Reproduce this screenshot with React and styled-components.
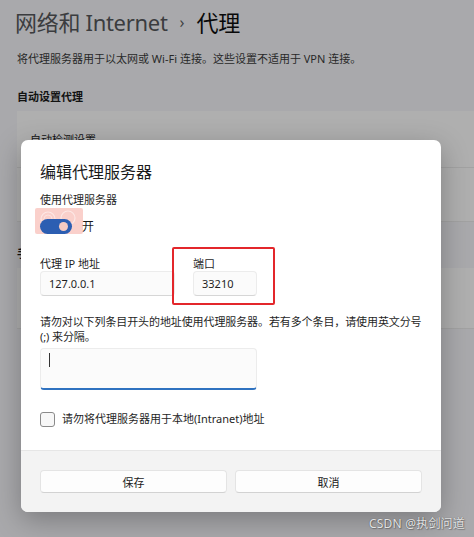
import React from "react";
import styled, { createGlobalStyle } from "styled-components";

const Global = createGlobalStyle`
  html, body {
    margin: 0;
    padding: 0;
    background: #f2f3f6;
    overflow: hidden;
  }
  body {
    font-family: "Noto Sans", "Noto Sans CJK SC", sans-serif;
    color: #1b1b1b;
  }
`;

// Settings page behind the dialog
const Page = styled.div`
  position: relative;
  width: 474px;
  height: 537px;
  overflow: hidden;
  padding: 7px 0 0 17px;
  box-sizing: border-box;
`;

const Header = styled.h1`
  margin: 0 0 0 -2px;
  font-size: 22px;
  font-weight: 400;
  line-height: 30px;
  display: flex;
  align-items: center;
  gap: 12px;
  white-space: nowrap;
`;

const Crumb = styled.span`
  color: ${(p) => (p.$current ? "#0d0d0d" : "#55575b")};
  letter-spacing: -0.3px;
`;

const Chevron = styled.span`
  font-size: 16px;
  color: #5c5e62;
`;

const Desc = styled.p`
  margin: 14px 0 0;
  font-size: 11px;
  line-height: 16px;
  color: #3a3a3a;
`;

const SectionTitle = styled.h2`
  margin: ${(p) => p.$top || "22px"} 0 6px;
  font-size: 11px;
  font-weight: 600;
  line-height: 16px;
`;

const Card = styled.div`
  display: flex;
  flex-direction: column;
`;

const CardRow = styled.div`
  height: ${(p) => p.$h || 54}px;
  background: #fbfbfb;
  border-bottom: 1px solid #e8e8e8;
  padding: 0 13px;
  display: flex;
  align-items: center;
  font-size: 11px;
  color: #222;
`;

const Overlay = styled.div`
  position: absolute;
  inset: 0;
  background: rgba(0, 0, 0, 0.3);
`;

// Dialog
const Dialog = styled.div`
  position: absolute;
  left: 21px;
  top: 140px;
  width: 420px;
  background: #fff;
  border-radius: 7px;
  box-shadow: 0 8px 28px rgba(0, 0, 0, 0.28);
  overflow: hidden;
`;

const Body = styled.div`
  position: relative;
  padding: 21px 19px 23px;
  display: flex;
  flex-direction: column;
`;

const Title = styled.div`
  font-size: 16px;
  line-height: 22px;
  color: #1a1a1a;
`;

const Label = styled.div`
  font-size: 11px;
  line-height: ${(p) => p.$lh || 16}px;
  color: #1f1f1f;
  margin-top: ${(p) => p.$mt || 0}px;
  white-space: nowrap;
`;

const ToggleRow = styled.div`
  position: relative;
  z-index: 1;
  margin-top: 8px;
  height: 20px;
  display: flex;
  align-items: center;
  gap: 10px;
  font-size: 12px;
`;

const Toggle = styled.div`
  width: 32px;
  height: 15px;
  border-radius: 8px;
  background: #2c5eb2;
  position: relative;
  &::after {
    content: "";
    position: absolute;
    right: 4px;
    top: 3px;
    width: 9px;
    height: 9px;
    border-radius: 50%;
    background: #f6cbc2;
  }
`;

const Stamp = styled.svg`
  position: absolute;
  left: 14px;
  top: 68px;
`;

const Fields = styled.div`
  margin-top: 21px;
  display: flex;
  gap: 18px;
`;

const Field = styled.div`
  display: flex;
  flex-direction: column;
`;

const Input = styled.div`
  box-sizing: border-box;
  width: ${(p) => p.$w}px;
  height: ${(p) => p.$h || 25}px;
  background: #fbfbfb;
  border: 1px solid #ececec;
  border-bottom: ${(p) => (p.$focus ? "2px solid #2f72c0" : "1px solid #d6d6d6")};
  border-radius: 4px;
  padding: ${(p) => (p.$focus ? "4px 8px" : "0 8px")};
  display: flex;
  align-items: ${(p) => (p.$focus ? "flex-start" : "center")};
  font-size: 11px;
  color: #1f1f1f;
`;

const Caret = styled.span`
  width: 1px;
  height: 14px;
  background: #333;
`;

const Highlight = styled.div`
  position: absolute;
  left: 151px;
  top: 107px;
  width: 103px;
  height: 58px;
  border: 2px solid #e3262b;
  border-radius: 2px;
  box-sizing: border-box;
`;

const Hint = styled.div`
  margin-top: 18px;
  margin-bottom: 4px;
  font-size: 11px;
  line-height: 15px;
  color: #1f1f1f;
  letter-spacing: -0.1px;
  white-space: nowrap;
`;

const CheckRow = styled.label`
  margin-top: 21px;
  display: flex;
  align-items: center;
  gap: 7px;
  font-size: 11px;
  line-height: 16px;
  color: #1f1f1f;
`;

const Box = styled.span`
  width: 15px;
  height: 15px;
  box-sizing: border-box;
  border: 1px solid #8a8a8a;
  border-radius: 3px;
  background: #f7f7f7;
`;

const Footer = styled.div`
  background: #f3f3f3;
  border-top: 1px solid #e6e6e6;
  padding: 19px;
  display: grid;
  grid-template-columns: 1fr 1fr;
  gap: 8px;
`;

const Button = styled.button`
  height: 23px;
  background: #fdfdfd;
  border: 1px solid #e4e4e4;
  border-bottom-color: #d2d2d2;
  border-radius: 4px;
  font-family: inherit;
  font-size: 11px;
  color: #1a1a1a;
  padding: 0;
`;

const Watermark = styled.div`
  position: absolute;
  right: 9px;
  bottom: 5px;
  font-size: 12px;
  color: rgba(255, 255, 255, 0.85);
  text-shadow: 0 0 1px rgba(0, 0, 0, 0.5), 1px 1px 1px rgba(0, 0, 0, 0.25);
  letter-spacing: 0.2px;
`;

export default function App() {
  return (
    <>
      <Global />
      <Page>
        <Header>
          <Crumb>网络和 Internet</Crumb>
          <Chevron>›</Chevron>
          <Crumb $current>代理</Crumb>
        </Header>
        <Desc>将代理服务器用于以太网或 Wi-Fi 连接。这些设置不适用于 VPN 连接。</Desc>
        <SectionTitle>自动设置代理</SectionTitle>
        <Card>
          <CardRow $h={56}>自动检测设置</CardRow>
          <CardRow $h={53} />
        </Card>
        <SectionTitle $top="24px">手动设置代理</SectionTitle>
        <Card>
          <CardRow $h={60} />
        </Card>

        <Overlay />

        <Dialog>
          <Body>
            <Title>编辑代理服务器</Title>
            <Label $mt={9}>使用代理服务器</Label>
            <ToggleRow>
              <Toggle />
              <span>开</span>
            </ToggleRow>
            <Stamp width="48" height="26" viewBox="0 0 48 26">
              <rect width="48" height="26" rx="2" fill="rgba(244,150,140,0.45)" />
              <circle cx="13" cy="11" r="7" fill="none" stroke="rgba(255,255,255,0.5)" strokeWidth="1.2" />
              <circle cx="13" cy="11" r="4" fill="none" stroke="rgba(255,255,255,0.4)" strokeWidth="1" />
              <circle cx="33" cy="10" r="7" fill="none" stroke="rgba(255,255,255,0.5)" strokeWidth="1.2" />
            </Stamp>
            <Fields>
              <Field>
                <Label $lh={14}>代理 IP 地址</Label>
                <Input $w={135}>127.0.0.1</Input>
              </Field>
              <Field>
                <Label $lh={14}>端口</Label>
                <Input $w={64}>33210</Input>
              </Field>
            </Fields>
            <Highlight />
            <Hint>
              请勿对以下列条目开头的地址使用代理服务器。若有多个条目，请使用英文分号
              <br />
              (;) 来分隔。
            </Hint>
            <Input $w={217} $h={42} $focus>
              <Caret />
            </Input>
            <CheckRow>
              <Box />
              请勿将代理服务器用于本地(Intranet)地址
            </CheckRow>
          </Body>
          <Footer>
            <Button>保存</Button>
            <Button>取消</Button>
          </Footer>
        </Dialog>

        <Watermark>CSDN @执剑问道</Watermark>
      </Page>
    </>
  );
}
